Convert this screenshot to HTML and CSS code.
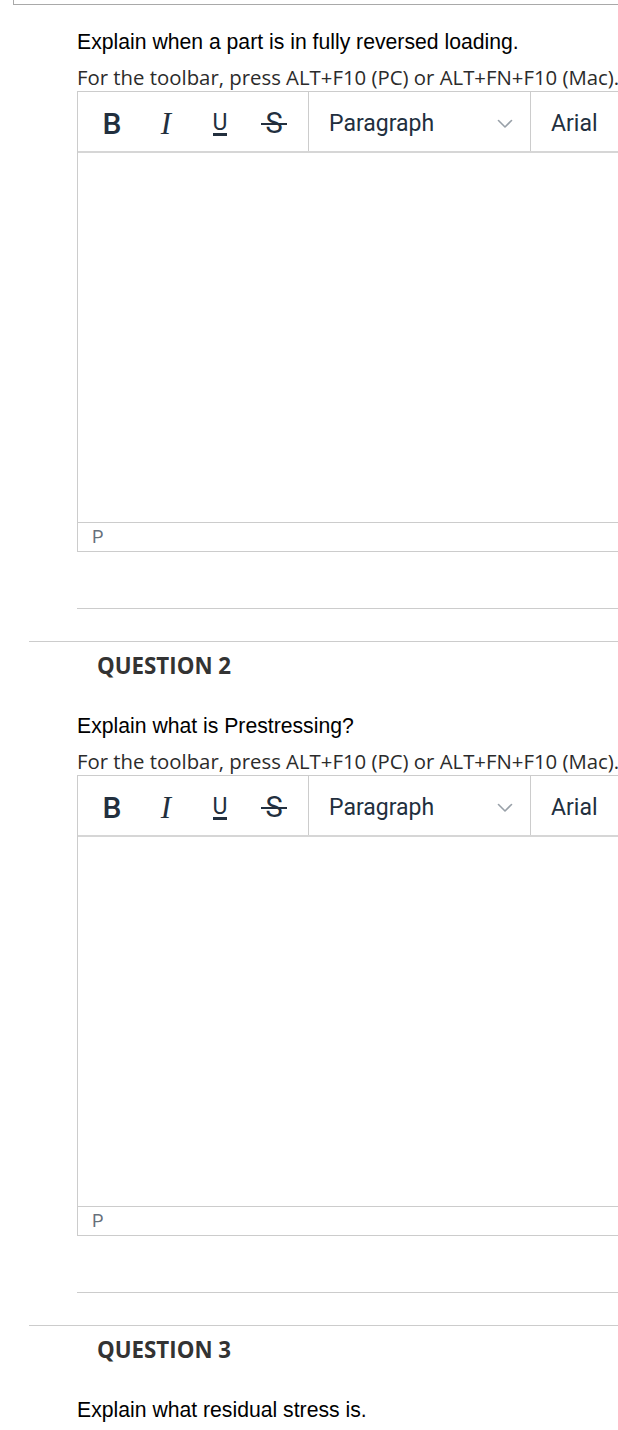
FILE: index.html
```html
<!DOCTYPE html>
<html>
<head>
<meta charset="utf-8">
<link rel="stylesheet" href="styles.css">
</head>
<body>
<div class="page">
  <div class="topbox"></div>

  <section class="question first">
    <div class="content">
      <p class="qtext">Explain when a part is in fully reversed loading.</p>
      <p class="hint">For the toolbar, press ALT+F10 (PC) or ALT+FN+F10 (Mac).</p>
      <div class="editor">
        <div class="toolbar">
          <div class="group fmt">
            <span class="btn"><span class="ic-b">B</span></span>
            <span class="btn"><span class="ic-i">I</span></span>
            <span class="btn"><span class="ic-u">U</span></span>
            <span class="btn"><span class="ic-s">S</span></span>
          </div>
          <div class="group block">
            <span class="sel-text">Paragraph</span>
            <svg class="chev" width="16" height="10" viewBox="0 0 16 10"><polyline points="1.5,1.5 8,8 14.5,1.5" fill="none" stroke="#98a0a8" stroke-width="1.6" stroke-linecap="round" stroke-linejoin="round"/></svg>
          </div>
          <div class="group font">
            <span class="sel-text">Arial</span>
          </div>
        </div>
        <div class="body"></div>
        <div class="status">P</div>
      </div>
      <div class="rule"></div>
    </div>
  </section>

  <section class="question">
    <div class="divider"></div>
    <h2 class="qtitle">QUESTION 2</h2>
    <div class="content">
      <p class="qtext">Explain what is Prestressing?</p>
      <p class="hint">For the toolbar, press ALT+F10 (PC) or ALT+FN+F10 (Mac).</p>
      <div class="editor">
        <div class="toolbar">
          <div class="group fmt">
            <span class="btn"><span class="ic-b">B</span></span>
            <span class="btn"><span class="ic-i">I</span></span>
            <span class="btn"><span class="ic-u">U</span></span>
            <span class="btn"><span class="ic-s">S</span></span>
          </div>
          <div class="group block">
            <span class="sel-text">Paragraph</span>
            <svg class="chev" width="16" height="10" viewBox="0 0 16 10"><polyline points="1.5,1.5 8,8 14.5,1.5" fill="none" stroke="#98a0a8" stroke-width="1.6" stroke-linecap="round" stroke-linejoin="round"/></svg>
          </div>
          <div class="group font">
            <span class="sel-text">Arial</span>
          </div>
        </div>
        <div class="body"></div>
        <div class="status">P</div>
      </div>
      <div class="rule"></div>
    </div>
  </section>

  <section class="question">
    <div class="divider"></div>
    <h2 class="qtitle">QUESTION 3</h2>
    <div class="content">
      <p class="qtext">Explain what residual stress is.</p>
    </div>
  </section>
</div>
</body>
</html>
```

FILE: styles.css
```css
html, body {
  margin: 0;
  padding: 0;
  background: #ffffff;
}

.page {
  width: 618px;
  height: 1430px;
  overflow: hidden;
}

.topbox {
  margin-left: 13px;
  width: 700px;
  height: 4px;
  border-left: 1px solid #a9a9a9;
  border-bottom: 1px solid #a9a9a9;
}

.content {
  padding-left: 77px;
}

.qtext {
  margin: 34px 0 0;
  font: 21.2px/24px "Liberation Sans", Arial, sans-serif;
  color: #000000;
  white-space: nowrap;
}

.first .qtext {
  margin-top: 25px;
}

.hint {
  margin: 10px 0 0;
  font: 20.35px/26px "Open Sans", "Noto Sans", sans-serif;
  color: #2b2b2b;
  white-space: nowrap;
}

.editor {
  margin-top: 1px;
  width: 720px;
  border: 1px solid #cccccc;
}

.toolbar {
  display: flex;
  height: 59px;
  border-bottom: 2px solid #d6d6d6;
}

.group {
  display: flex;
  flex-shrink: 0;
  align-items: center;
  border-right: 1px solid #cccccc;
  box-sizing: border-box;
}

.fmt {
  padding: 0 7px;
}

.btn {
  width: 54px;
  height: 59px;
  display: flex;
  align-items: center;
  justify-content: center;
  color: #222f3e;
}

.btn > span {
  margin-top: 4px;
}

.ic-b {
  font: 500 30px/1 Roboto, sans-serif;
}

.ic-i {
  font: italic 400 31px/1 "Liberation Serif", serif;
}

.btn > .ic-u {
  font: 400 23px/16px Roboto, sans-serif;
  display: inline-block;
  border-bottom: 3px solid #222f3e;
  padding-bottom: 2px;
  margin-top: 8px;
}

.ic-s {
  position: relative;
  font: 400 29px/1 Roboto, sans-serif;
}

.ic-s::after {
  content: "";
  position: absolute;
  left: -4px;
  right: -4px;
  top: 50%;
  height: 2.5px;
  margin-top: -1px;
  background: #222f3e;
}

.block {
  width: 222px;
  padding: 0 17px 0 20px;
  justify-content: space-between;
}

.font {
  width: 222px;
  padding-left: 20px;
}

.sel-text {
  margin-top: 4px;
  font: 23px/1 Roboto, sans-serif;
  color: #222f3e;
}

.chev {
  display: block;
  margin-top: 4px;
}

.body {
  height: 369px;
}

.status {
  border-top: 1px solid #cccccc;
  height: 28px;
  padding-left: 14px;
  font: 18px/28px Roboto, sans-serif;
  color: rgba(34, 47, 62, 0.7);
}

.rule {
  margin-top: 56px;
  height: 1px;
  background: #cccccc;
}

.divider {
  margin: 32px 0 0 29px;
  height: 1px;
  background: #cccccc;
}

.qtitle {
  margin: 10px 0 0 97px;
  font: 700 22.3px/28px "Open Sans", "Noto Sans", sans-serif;
  color: #333333;
}
```
